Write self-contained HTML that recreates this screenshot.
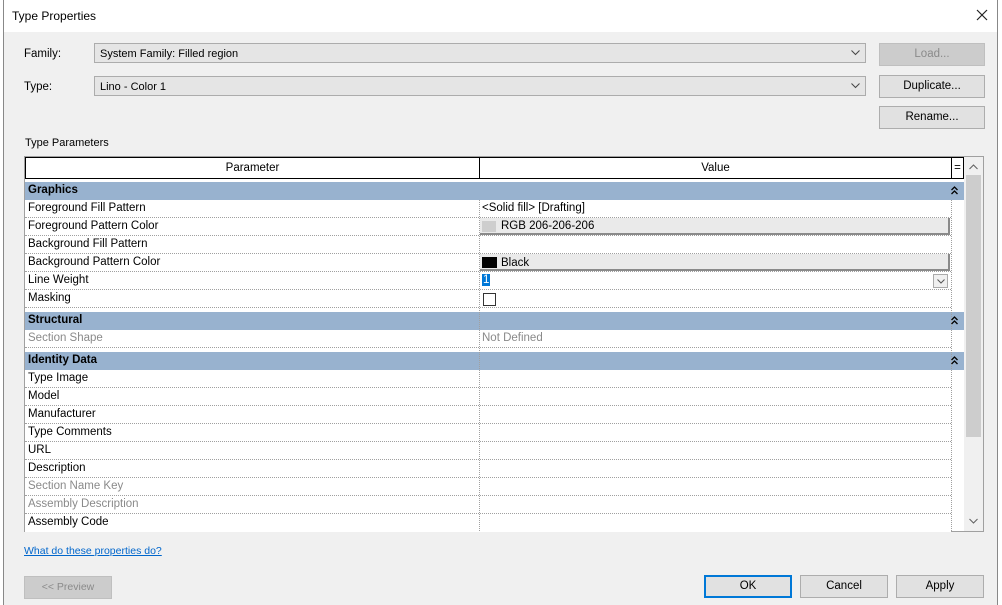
<!DOCTYPE html>
<html><head><style>
*{margin:0;padding:0;box-sizing:border-box}
body{width:1002px;height:605px;overflow:hidden;background:#fff;font-family:"Liberation Sans",sans-serif;font-size:11.5px;color:#000;position:relative}
.dlg{position:absolute;left:3px;top:0;width:995px;height:605px;background:#f0f0f0;border-left:1px solid #888;border-right:1px solid #888}
.title{position:absolute;left:0;top:0;width:100%;height:32px;background:#fff}
.a{position:absolute;white-space:nowrap}
.combo{position:absolute;background:#e5e5e5;border:1px solid #acacac;height:20px;padding:4px 0 0 5px;font-size:11px}
.btn{position:absolute;background:#e1e1e1;border:1px solid #adadad;height:23px;text-align:center;line-height:21px;font-size:11.5px}
.row{position:absolute;left:25px;width:926px;height:18px;background:#fff;border-bottom:1px dotted #a0a0a0}
.row span{position:absolute;top:2px}
.grp{position:absolute;left:25px;width:939px;height:18px;background:#98b2cf;font-weight:bold}
.grp span{position:absolute;left:3px;top:2px}
.grp svg{position:absolute;right:6px;top:4px}
.gray{color:#8a8a8a}
</style></head><body>
<div class="dlg">
<div class="title"><span class="a" style="left:8px;top:9px;font-size:12px">Type Properties</span>
<svg class="a" style="left:972px;top:9px" width="12" height="12"><path d="M1 1L11 11M11 1L1 11" stroke="#222" stroke-width="1.2"/></svg></div>
<span class="a" style="left:20px;top:48px">Family:</span>
<span class="a" style="left:20px;top:81px">Type:</span>
<div class="combo" style="left:90px;top:43px;width:772px">System Family: Filled region<svg class="a" style="right:5px;top:6px" width="9" height="6"><path d="M0.5 0.5L4.5 4.5L8.5 0.5" stroke="#444" fill="none"/></svg></div>
<div class="combo" style="left:90px;top:76px;width:772px">Lino - Color 1<svg class="a" style="right:5px;top:6px" width="9" height="6"><path d="M0.5 0.5L4.5 4.5L8.5 0.5" stroke="#444" fill="none"/></svg></div>
<div class="btn" style="left:875px;top:43px;width:106px;background:#cccccc;border-color:#bfbfbf;color:#8a8a8a">Load...</div>
<div class="btn" style="left:875px;top:75px;width:106px">Duplicate...</div>
<div class="btn" style="left:875px;top:106px;width:106px">Rename...</div>
<span class="a" style="left:21px;top:137px;font-size:11px">Type Parameters</span>
</div>
<div class="a" style="left:24px;top:156px;width:960px;height:376px;background:#fff;border:1px solid #a0a0a0"></div>
<div class="a" style="left:25px;top:157px;width:455px;height:22px;border:1px solid #000;text-align:center;line-height:20px">Parameter</div>
<div class="a" style="left:479px;top:157px;width:473px;height:22px;border:1px solid #000;text-align:center;line-height:20px">Value</div>
<div class="a" style="left:951px;top:157px;width:13px;height:22px;border:1px solid #000;text-align:center;line-height:20px">=</div>
<div class="a" style="left:964px;top:157px;width:19px;height:374px;background:#f0f0f0"></div>
<div class="a" style="left:966px;top:175px;width:15px;height:262px;background:#cdcdcd"></div>
<svg class="a" style="left:969px;top:164px" width="9" height="6"><path d="M0.5 5L4.5 1L8.5 5" stroke="#606060" fill="none"/></svg>
<svg class="a" style="left:969px;top:518px" width="9" height="6"><path d="M0.5 1L4.5 5L8.5 1" stroke="#606060" fill="none"/></svg>

<div class="grp" style="top:182px"><span>Graphics</span><svg width="7" height="9"><path d="M0.5 4L3.5 1L6.5 4M0.5 8L3.5 5L6.5 8" stroke="#000" fill="none" stroke-width="1.3"/></svg></div>
<div class="row" style="top:200px"><span style="left:3px">Foreground Fill Pattern</span><span style="left:457px">&lt;Solid fill&gt; [Drafting]</span></div>
<div class="row" style="top:218px"><span style="left:3px">Foreground Pattern Color</span></div>
<div class="a" style="left:480px;top:218px;width:470px;height:17px;background:#eaeaea;border-right:2px solid #8a8a8a;border-bottom:2px solid #8a8a8a"><div class="a" style="left:2px;top:3px;width:14px;height:11px;background:#cecece"></div><span class="a" style="left:21px;top:2px">RGB 206-206-206</span></div>
<div class="row" style="top:236px"><span style="left:3px">Background Fill Pattern</span></div>
<div class="row" style="top:254px"><span style="left:3px">Background Pattern Color</span></div>
<div class="a" style="left:480px;top:254px;width:470px;height:17px;background:#eaeaea;border-right:2px solid #8a8a8a;border-bottom:2px solid #8a8a8a"><div class="a" style="left:2px;top:3px;width:15px;height:11px;background:#000"></div><span class="a" style="left:21px;top:3px">Black</span></div>
<div class="row" style="top:272px"><span style="left:3px">Line Weight</span><span style="left:457px;background:#0078d7;color:#fff;padding:0 1px">1</span></div>
<div class="a" style="left:933px;top:274px;width:15px;height:14px;border:1px solid #aaa;background:#f0f0f0"><svg class="a" style="left:3px;top:4px" width="8" height="5"><path d="M0.5 0.5L4 4L7.5 0.5" stroke="#555" fill="none"/></svg></div>
<div class="row" style="top:290px"><span style="left:3px">Masking</span></div>
<div class="a" style="left:483px;top:293px;width:13px;height:13px;border:1px solid #333;background:#fff"></div>
<div class="grp" style="top:312px"><span>Structural</span><svg width="7" height="9"><path d="M0.5 4L3.5 1L6.5 4M0.5 8L3.5 5L6.5 8" stroke="#000" fill="none" stroke-width="1.3"/></svg></div>
<div class="row" style="top:330px"><span style="left:3px" class="gray">Section Shape</span><span style="left:457px" class="gray">Not Defined</span></div>
<div class="grp" style="top:352px"><span>Identity Data</span><svg width="7" height="9"><path d="M0.5 4L3.5 1L6.5 4M0.5 8L3.5 5L6.5 8" stroke="#000" fill="none" stroke-width="1.3"/></svg></div>
<div class="row" style="top:370px"><span style="left:3px">Type Image</span></div>
<div class="row" style="top:388px"><span style="left:3px">Model</span></div>
<div class="row" style="top:406px"><span style="left:3px">Manufacturer</span></div>
<div class="row" style="top:424px"><span style="left:3px">Type Comments</span></div>
<div class="row" style="top:442px"><span style="left:3px">URL</span></div>
<div class="row" style="top:460px"><span style="left:3px">Description</span></div>
<div class="row" style="top:478px"><span style="left:3px" class="gray">Section Name Key</span></div>
<div class="row" style="top:496px"><span style="left:3px" class="gray">Assembly Description</span></div>
<div class="row" style="top:514px;border-bottom:none"><span style="left:3px">Assembly Code</span></div>
<div class="a" style="left:479px;top:200px;height:331px;border-left:1px dotted #a0a0a0"></div>
<div class="a" style="left:951px;top:200px;height:331px;border-left:1px dotted #a0a0a0"></div>

<span class="a" style="left:24px;top:545px;color:#0066cc;text-decoration:underline;font-size:10.5px">What do these properties do?</span>
<div class="btn" style="left:24px;top:576px;width:88px;background:#cccccc;border-color:#bfbfbf;color:#8a8a8a;font-size:10.5px">&lt;&lt; Preview</div>
<div class="btn" style="left:704px;top:575px;width:88px;border:2px solid #0078d7;line-height:19px">OK</div>
<div class="btn" style="left:800px;top:575px;width:88px">Cancel</div>
<div class="btn" style="left:896px;top:575px;width:88px">Apply</div>
</body></html>
